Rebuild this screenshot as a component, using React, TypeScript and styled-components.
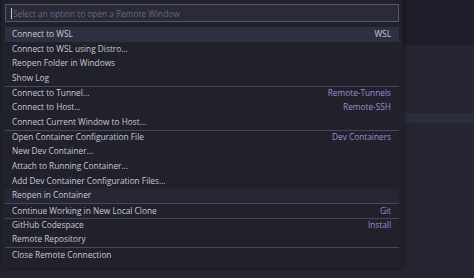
import React from "react";
import styled, { createGlobalStyle } from "styled-components";

const Global = createGlobalStyle`
  html, body { margin: 0; padding: 0; width: 474px; height: 278px; overflow: hidden; background: #262633; }
  #root { width: 474px; height: 278px; }
  * { box-sizing: border-box; }
`;

const Workbench = styled.div`
  position: relative;
  width: 474px;
  height: 278px;
  display: flex;
  flex-direction: column;
  background: #262633;
`;

const TitleArea = styled.div`
  height: 45px;
  background: #1e1f2a;
`;

const EditorArea = styled.div`
  flex: 1;
  padding-top: 68px;
  background: #262633;
`;

const LineHighlight = styled.div`
  height: 10px;
  background: #2b2e3f;
`;

const QuickPick = styled.div`
  position: absolute;
  left: 1px;
  top: 0;
  width: 402px;
  padding: 4px 4px 6px 4px;
  background: #21212c;
  box-shadow: 0 0 6px rgba(0, 0, 0, 0.55);
  font-family: "Open Sans", "Noto Sans", sans-serif;
  font-size: 8.3px;
  display: flex;
  flex-direction: column;
  gap: 5px;
`;

const InputBox = styled.div`
  height: 18px;
  border: 1px solid #56566b;
  background: #2a2a38;
  display: flex;
  align-items: center;
  padding-left: 5px;
  gap: 1px;
`;

const Caret = styled.span`
  width: 1px;
  height: 11px;
  background: #c8c8d6;
`;

const Placeholder = styled.span`
  color: #696980;
  white-space: nowrap;
  font-size: 8.3px;
`;

const List = styled.div`
  display: flex;
  flex-direction: column;
`;

const Row = styled.div<{ $sep?: boolean; $selected?: boolean; $hover?: boolean }>`
  height: 14.67px;
  display: flex;
  align-items: center;
  justify-content: space-between;
  padding: 0 8px 0 7px;
  border-top: ${(p) => (p.$sep ? "1px solid #48485c" : "none")};
  background: ${(p) => (p.$selected ? "#2e3041" : p.$hover ? "#262634" : "transparent")};
  color: #c8c8d5;
  white-space: nowrap;
`;

const Label = styled.span`
  line-height: 1;
`;

const Desc = styled.span<{ $selected?: boolean }>`
  color: ${(p) => (p.$selected ? "#c9c9d8" : "#9f8cd0")};
  line-height: 1;
`;

type Item = { label: string; desc?: string; sep?: boolean; selected?: boolean; hover?: boolean };

const items: Item[] = [
  { label: "Connect to WSL", desc: "WSL", selected: true },
  { label: "Connect to WSL using Distro..." },
  { label: "Reopen Folder in Windows" },
  { label: "Show Log" },
  { label: "Connect to Tunnel...", desc: "Remote-Tunnels", sep: true },
  { label: "Connect to Host...", desc: "Remote-SSH" },
  { label: "Connect Current Window to Host..." },
  { label: "Open Container Configuration File", desc: "Dev Containers", sep: true },
  { label: "New Dev Container..." },
  { label: "Attach to Running Container..." },
  { label: "Add Dev Container Configuration Files..." },
  { label: "Reopen in Container", hover: true },
  { label: "Continue Working in New Local Clone", desc: "Git", sep: true },
  { label: "GitHub Codespace", desc: "Install", sep: true },
  { label: "Remote Repository" },
  { label: "Close Remote Connection", sep: true },
];

export default function App() {
  return (
    <>
      <Global />
      <Workbench>
        <TitleArea />
        <EditorArea>
          <LineHighlight />
        </EditorArea>
        <QuickPick>
          <InputBox>
            <Caret />
            <Placeholder>Select an option to open a Remote Window</Placeholder>
          </InputBox>
          <List>
            {items.map((it) => (
              <Row key={it.label} $sep={it.sep} $selected={it.selected} $hover={it.hover}>
                <Label>{it.label}</Label>
                {it.desc && <Desc $selected={it.selected}>{it.desc}</Desc>}
              </Row>
            ))}
          </List>
        </QuickPick>
      </Workbench>
    </>
  );
}
